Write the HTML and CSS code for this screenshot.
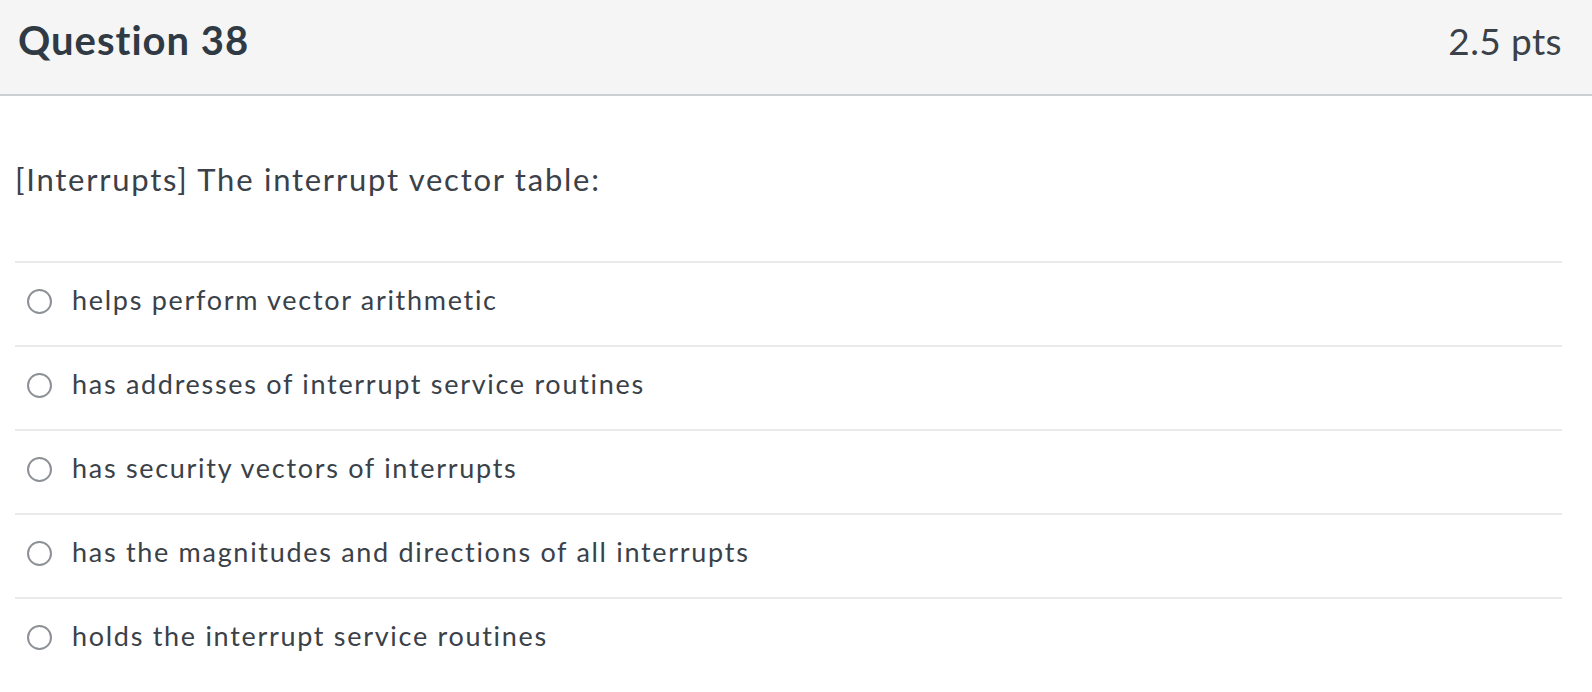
FILE: index.html
```html
<!DOCTYPE html>
<html>
<head>
<meta charset="utf-8">
<link rel="stylesheet" href="styles.css">
</head>
<body>
<div class="question">
  <div class="header">
    <div class="title">Question 38</div>
    <div class="points">2.5 pts</div>
  </div>
  <div class="content">
    <div class="prompt">[Interrupts] The interrupt vector table:</div>
    <div class="answers">
      <div class="answer"><span class="radio"></span><span class="label">helps perform vector arithmetic</span></div>
      <div class="answer"><span class="radio"></span><span class="label">has addresses of interrupt service routines</span></div>
      <div class="answer"><span class="radio"></span><span class="label">has security vectors of interrupts</span></div>
      <div class="answer"><span class="radio"></span><span class="label">has the magnitudes and directions of all interrupts</span></div>
      <div class="answer"><span class="radio"></span><span class="label">holds the interrupt service routines</span></div>
    </div>
  </div>
</div>
</body>
</html>
```

FILE: styles.css
```css
html, body {
  margin: 0;
  padding: 0;
  background: #ffffff;
}
body {
  font-family: Lato, "Open Sans", sans-serif;
  color: #2d3b45;
  width: 1592px;
  height: 692px;
  overflow: hidden;
}
.header {
  display: flex;
  justify-content: space-between;
  align-items: baseline;
  height: 96px;
  background: #f5f5f5;
  border-bottom: 2px solid #cbcfd2;
  padding: 16px 30px 0 18px;
  box-sizing: border-box;
}
.title {
  font-size: 40px;
  line-height: 48px;
  font-weight: bold;
  letter-spacing: 1px;
  color: #2f3a44;
}
.points {
  font-size: 37px;
  line-height: 48px;
  letter-spacing: 0.4px;
  color: #3a4148;
}
.content {
  padding: 0 30px 0 15px;
}
.prompt {
  font-size: 31px;
  line-height: 40px;
  letter-spacing: 1.75px;
  margin-top: 63px;
  margin-bottom: 62px;
  color: #3a4148;
}
.answer {
  display: flex;
  align-items: center;
  border-top: 2px solid #e8eaec;
  height: 84px;
  box-sizing: border-box;
  padding: 0 0 6px 12px;
}
.radio {
  width: 21px;
  height: 21px;
  border: 2px solid #8d9195;
  border-radius: 50%;
  margin-right: 20px;
  flex: none;
}
.label {
  font-size: 27px;
  letter-spacing: 1.7px;
  color: #3a4148;
  margin-bottom: 4px;
}
```
